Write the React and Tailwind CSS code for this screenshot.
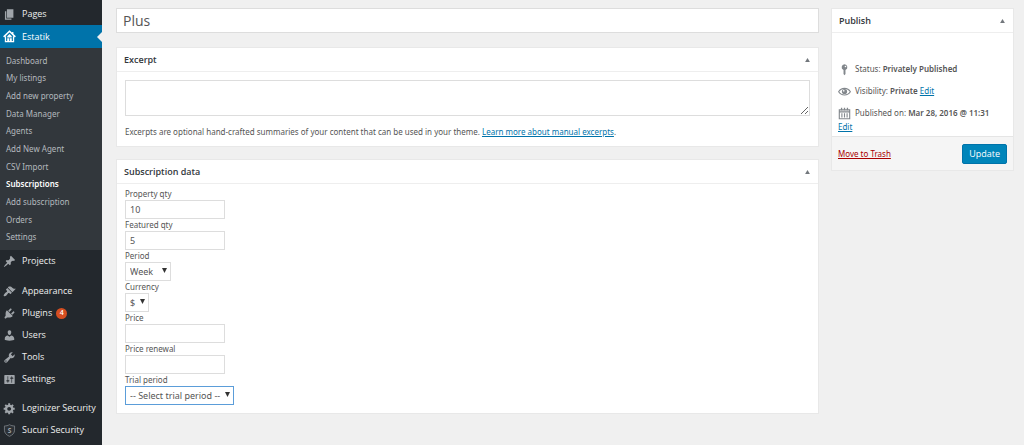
import { useState } from 'react';

const icons = {
  pages: 'M6 15V2h10v13H6zm-1 1h8v2H3V5h2v11z',
  pin: 'M10.44 3.02l1.82-1.82 6.36 6.35-1.83 1.82c-1.05-.68-2.48-.57-3.41.36l-.75.75c-.92.93-1.04 2.35-.35 3.41l-1.83 1.82-2.41-2.41-2.8 2.79c-.42.42-3.38 2.71-3.8 2.29s1.86-3.39 2.28-3.81l2.79-2.79L4.1 9.36l1.83-1.82c1.05.69 2.48.57 3.4-.36l.75-.75c.93-.92 1.05-2.35.36-3.41z',
  brush: 'M14.48 11.06L7.41 3.99l1.5-1.5c.5-.56 2.3-.47 3.51.32 1.21.8 1.43 1.28 2.91 2.1 1.18.64 2.45 1.26 4.45.85zm-.71.71L6.7 4.7 4.93 6.47c-.39.39-.39 1.02 0 1.41l1.06 1.06c.39.39.39 1.03 0 1.42-.6.6-1.43 1.11-2.21 1.69-.35.26-.7.53-1.01.84C1.43 14.23.4 16.08 1.4 17.07c.99 1 2.84-.03 4.18-1.36.31-.31.58-.66.85-1.02.57-.78 1.08-1.61 1.69-2.21.39-.39 1.02-.39 1.41 0l1.06 1.06c.39.39 1.02.39 1.41 0z',
  plug: 'M13.11 4.36L9.87 7.6 8 5.73l3.24-3.24c.35-.34 1.05-.2 1.56.32.52.51.66 1.21.31 1.55zm-8 1.77l.91-1.12 9.01 9.01-1.19.84c-.71.71-2.63 1.16-3.82 1.16H6.14L4.9 17.26c-.59.59-1.54.59-2.12 0-.59-.58-.59-1.53 0-2.12l1.24-1.24v-3.88c0-1.13.4-3.19 1.09-3.89zm7.26 3.97l3.24-3.24c.34-.35 1.04-.21 1.55.31.52.51.66 1.21.31 1.55l-3.24 3.25z',
  user: 'M10 9.25c-2.27 0-2.73-3.44-2.73-3.44C7 4.02 7.82 2 9.97 2c2.16 0 2.98 2.02 2.71 3.81 0 0-.41 3.44-2.68 3.44zm0 2.57L12.72 10c2.39 0 4.52 2.33 4.52 4.53v2.49s-3.65 1.13-7.24 1.13c-3.65 0-7.24-1.13-7.24-1.13v-2.49c0-2.25 1.94-4.48 4.47-4.48z',
  wrench: 'M16.68 9.77c-1.34 1.34-3.3 1.67-4.95.99l-5.41 6.52c-.99.99-2.59.99-3.58 0s-.99-2.59 0-3.57l6.52-5.42c-.68-1.65-.35-3.61.99-4.95 1.28-1.28 3.12-1.62 4.72-1.06l-2.89 2.89 2.82 2.82 2.86-2.87c.53 1.58.18 3.39-1.08 4.65zM3.81 16.21c.4.39 1.04.39 1.43 0 .4-.4.4-1.04 0-1.43-.39-.4-1.03-.4-1.43 0-.39.39-.39 1.03 0 1.43z',
  sliders: 'M18 16V4c0-.55-.45-1-1-1H3c-.55 0-1 .45-1 1v12c0 .55.45 1 1 1h14c.55 0 1-.45 1-1zM8 11h1c.55 0 1 .45 1 1s-.45 1-1 1H8v1.5c0 .28-.22.5-.5.5s-.5-.22-.5-.5V13H6c-.55 0-1-.45-1-1s.45-1 1-1h1V5.5c0-.28.22-.5.5-.5s.5.22.5.5V11zm5-2h-1c-.55 0-1-.45-1-1s.45-1 1-1h1V5.5c0-.28.22-.5.5-.5s.5.22.5.5V7h1c.55 0 1 .45 1 1s-.45 1-1 1h-1v5.5c0 .28-.22.5-.5.5s-.5-.22-.5-.5V9z',
  gear: 'M18 12h-2.18c-.17.7-.44 1.35-.81 1.93l1.54 1.54-2.1 2.1-1.54-1.54c-.58.36-1.23.63-1.91.79V19H8v-2.18c-.68-.16-1.33-.43-1.91-.79l-1.54 1.54-2.12-2.12 1.54-1.54c-.36-.58-.63-1.23-.79-1.91H1V9.03h2.17c.16-.7.44-1.35.8-1.94L2.43 5.55l2.1-2.1 1.54 1.54c.58-.37 1.24-.64 1.93-.81V2h3v2.18c.68.16 1.33.43 1.91.79l1.54-1.54 2.12 2.12-1.54 1.54c.36.59.64 1.24.8 1.94H18V12zm-8.5 1.5c1.66 0 3-1.34 3-3s-1.34-3-3-3-3 1.34-3 3 1.34 3 3 3z',
};

const submenu = [
  'Dashboard', 'My listings', 'Add new property', 'Data Manager', 'Agents', 'Add New Agent',
  'CSV Import', 'Subscriptions', 'Add subscription', 'Orders', 'Settings',
];

const Icon = ({ name }) => (
  <svg viewBox="0 0 20 20" className="size-[13px] shrink-0 fill-[#a0a5aa]" aria-hidden="true">
    <path d={icons[name]} />
  </svg>
);

const HouseIcon = () => (
  <svg viewBox="0 0 20 20" className="size-[13px] shrink-0" fill="none" stroke="#fff" aria-hidden="true">
    <path d="M1 10.5L10 2l9 8.5" strokeWidth="2.4" />
    <path d="M3.8 9.5V18h12.4V9.5M15 3v4" strokeWidth="2" />
    <path d="M10 6L6.5 9.5v2h7v-2zM6.5 12.5h3V17h-3zM10.5 12.5h3V17h-3z" fill="#fff" stroke="none" />
  </svg>
);

const ShieldIcon = () => (
  <svg viewBox="0 0 20 20" className="size-[13px] shrink-0" aria-hidden="true">
    <path d="M10 1c2.4 1.6 5 2 7.8 2v6.5c0 4.4-3 7.4-7.8 9.5-4.8-2.1-7.8-5.1-7.8-9.5V3C5 3 7.6 2.6 10 1z" fill="#2c3136" stroke="#6f757b" strokeWidth="1.5" />
    <text x="10" y="13.5" textAnchor="middle" fontSize="10" fontWeight="700" fill="#a0a5aa">S</text>
  </svg>
);

const StatusIcon = () => (
  <svg viewBox="0 0 20 20" className="size-[13px] shrink-0" fill="#82878c" aria-hidden="true">
    <path d="M10 2a4.5 4.5 0 0 1 1.5 8.7V17L10 19l-1.5-2v-6.3A4.5 4.5 0 0 1 10 2z" />
    <circle cx="11.5" cy="5.3" r="1.2" fill="#fff" />
  </svg>
);

const EyeIcon = () => (
  <svg viewBox="0 0 20 20" className="size-[13px] shrink-0" fill="none" stroke="#82878c" aria-hidden="true">
    <path d="M1 10.5C5 3.5 15 3.5 19 10.5 15 17 5 17 1 10.5z" strokeWidth="1.7" />
    <circle cx="10" cy="10" r="4" fill="#82878c" stroke="none" />
    <circle cx="8.8" cy="8.8" r="1.3" fill="#fff" stroke="none" />
  </svg>
);

const CalendarIcon = () => (
  <svg viewBox="0 0 20 20" className="size-[13px] shrink-0" fill="none" stroke="#82878c" aria-hidden="true">
    <path d="M2 4.5h16V18H2zM2 7.5h16" strokeWidth="1.7" />
    <path d="M5.5 1v4M10 1v4M14.5 1v4" strokeWidth="2" />
    <path d="M6 9.5V16M10 9.5V16M14 9.5V16" strokeWidth="1.7" />
  </svg>
);

function MenuItem({ icon, label, badge }) {
  return (
    <li>
      <a href="#" className="flex h-[22px] items-center gap-[6px] pl-[3px] font-['Open_Sans',sans-serif] text-[9px] text-[#eee]">
        {icon}
        <span>{label}</span>
        {badge && (
          <span className="-ml-[2px] flex size-[11px] items-center justify-center rounded-full bg-[#d54e21] text-[7px] font-semibold text-white">{badge}</span>
        )}
      </a>
    </li>
  );
}

function Panel({ title, children }) {
  const [open, setOpen] = useState(true);
  return (
    <section className="border border-[#e8e8e8] bg-white">
      <header className="flex h-6 items-center justify-between border-b border-[#eee] px-[7px]">
        <h2 className="font-['Open_Sans',sans-serif] text-[9px] font-semibold text-[#32373c]">{title}</h2>
        <button type="button" aria-label={`Toggle ${title}`} aria-expanded={open} onClick={() => setOpen(!open)}
          className="flex size-2 items-center justify-center">
          <svg viewBox="0 0 6 5" className="h-1 w-[5px] fill-[#72777c]"><path d="M3 0l3 5H0z" /></svg>
        </button>
      </header>
      {open && children}
    </section>
  );
}

function TextField({ id, label, value = '' }) {
  return (
    <div>
      <label htmlFor={id} className="block leading-3">{label}</label>
      <input id={id} type="text" defaultValue={value}
        className="block h-[19px] w-[100px] border border-[#ddd] bg-white px-1 text-[9px] text-[#555] outline-none" />
    </div>
  );
}

function SelectField({ id, label, option, width, border = 'border-[#ddd]' }) {
  return (
    <div>
      <label htmlFor={id} className="block leading-3">{label}</label>
      <div className={`relative ${width}`}>
        <select id={id} className={`block h-[19px] w-full appearance-none border bg-white pl-1 text-[9px] text-[#555] outline-none ${border}`}>
          <option>{option}</option>
        </select>
        <svg viewBox="0 0 6 6" className="pointer-events-none absolute top-[6px] right-1 size-[5px] fill-[#333]"><path d="M0 0h6L3 6z" /></svg>
      </div>
    </div>
  );
}

export default function App() {
  return (
    <div className="flex min-h-screen bg-[#f0f0f0] font-['Noto_Sans','Open_Sans',sans-serif] text-[8px] text-[#555]">
      <nav className="w-[102px] shrink-0 bg-[#23282d] pt-[3px] whitespace-nowrap">
        <ul>
          <MenuItem icon={<Icon name="pages" />} label="Pages" />
          <li>
            <a href="#" className="relative flex h-[23px] items-center gap-[6px] bg-[#0073aa] pl-[3px] font-['Open_Sans',sans-serif] text-[9px] font-medium text-white">
              <HouseIcon />
              <span>Estatik</span>
              <span className="absolute top-1/2 right-0 -translate-y-1/2 border-y-[5px] border-r-[5px] border-y-transparent border-r-[#f0f0f0]" />
            </a>
            <ul className="flex h-[202px] flex-col bg-[#32373c] py-1">
              {submenu.map(item => (
                <li key={item} className="flex flex-1 items-center pl-[6px]">
                  <a href="#" className={item === 'Subscriptions' ? 'font-semibold text-white' : 'text-[#b4b9be]'}>{item}</a>
                </li>
              ))}
            </ul>
          </li>
          <MenuItem icon={<Icon name="pin" />} label="Projects" />
        </ul>
        <ul className="pt-2">
          <MenuItem icon={<Icon name="brush" />} label="Appearance" />
          <MenuItem icon={<Icon name="plug" />} label="Plugins" badge="4" />
          <MenuItem icon={<Icon name="user" />} label="Users" />
          <MenuItem icon={<Icon name="wrench" />} label="Tools" />
          <MenuItem icon={<Icon name="sliders" />} label="Settings" />
        </ul>
        <ul className="pt-[7px]">
          <MenuItem icon={<Icon name="gear" />} label="Loginizer Security" />
          <MenuItem icon={<ShieldIcon />} label="Sucuri Security" />
        </ul>
      </nav>

      <div className="flex min-w-0 flex-1 items-start gap-3 pt-2 pr-[10px] pl-[14px]">
        <main className="flex min-w-0 flex-1 flex-col">
          <input type="text" aria-label="Title" defaultValue="Plus"
            className="h-[25px] w-full border border-[#ddd] bg-white px-[6px] font-['Open_Sans',sans-serif] text-[14px] text-[#555] outline-none" />

          <div className="mt-[14px] flex flex-col gap-3">
            <Panel title="Excerpt">
              <div className="p-2">
                <textarea aria-label="Excerpt" className="block h-9 w-full resize-y border border-[#ddd] bg-white p-1 outline-none" />
                <p className="mt-[10px] leading-3">
                  Excerpts are optional hand-crafted summaries of your content that can be used in your theme.{' '}
                  <a href="#" className="text-[#0073aa] underline">Learn more about manual excerpts</a>.
                </p>
              </div>
            </Panel>

            <Panel title="Subscription data">
              <form className="px-2 pt-1 pb-2">
                <TextField id="property-qty" label="Property qty" value="10" />
                <TextField id="featured-qty" label="Featured qty" value="5" />
                <SelectField id="period" label="Period" option="Week" width="w-[46px]" />
                <SelectField id="currency" label="Currency" option="$" width="w-6" />
                <TextField id="price" label="Price" />
                <TextField id="price-renewal" label="Price renewal" />
                <SelectField id="trial-period" label="Trial period" option="-- Select trial period --" width="w-[109px]" border="border-[#5b9dd9]" />
              </form>
            </Panel>
          </div>
        </main>

        <aside className="w-[183px] shrink-0">
          <Panel title="Publish">
            <div className="px-[6px] pt-[25px] pb-[5px]">
              <p className="flex h-[22px] items-center gap-1"><StatusIcon /><span>Status: <b className="font-semibold">Privately Published</b></span></p>
              <p className="flex h-[22px] items-center gap-1">
                <EyeIcon />
                <span>Visibility: <b className="font-semibold">Private</b> <a href="#" className="text-[#0073aa] underline">Edit</a></span>
              </p>
              <p className="flex h-[22px] items-center gap-1"><CalendarIcon /><span>Published on: <b className="font-semibold">Mar 28, 2016 @ 11:31</b></span></p>
              <a href="#" className="block h-[7px] w-fit leading-[6px] text-[#0073aa] underline">Edit</a>
            </div>
            <footer className="flex h-[34px] items-center justify-between border-t border-[#e5e5e5] bg-[#f5f5f5] px-[6px]">
              <a href="#" className="text-[#a00] underline">Move to Trash</a>
              <button type="button" className="h-5 rounded-xs border border-[#0073aa] bg-[#0085ba] px-[6px] font-['Open_Sans',sans-serif] text-[9px] text-white">Update</button>
            </footer>
          </Panel>
        </aside>
      </div>
    </div>
  );
}
